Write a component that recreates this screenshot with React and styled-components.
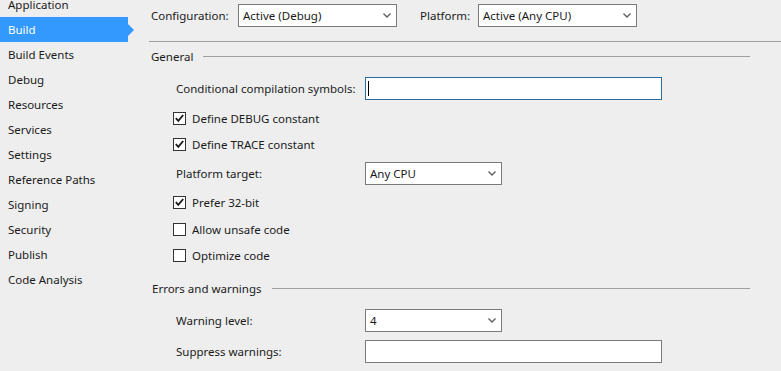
import React from 'react'
import styled, { createGlobalStyle } from 'styled-components'

const Global = createGlobalStyle`
  html, body {
    margin: 0;
    padding: 0;
    background: #eeeeee;
  }
  body {
    font-family: "Noto Sans", "Liberation Sans", sans-serif;
    font-size: 11.5px;
    color: #1a1a1a;
  }
`

const Page = styled.div`
  display: flex;
  width: 781px;
  height: 371px;
  overflow: hidden;
  background: #eeeeee;
`

const Sidebar = styled.div`
  width: 128px;
  flex-shrink: 0;
  display: flex;
  flex-direction: column;
  margin-top: -8px;
`

const NavItem = styled.div`
  position: relative;
  height: 25px;
  display: flex;
  align-items: center;
  padding-left: 8px;
  background: ${({ active }) => (active ? '#3399ff' : 'transparent')};
  color: ${({ active }) => (active ? '#ffffff' : '#1a1a1a')};
  cursor: default;

  &::after {
    content: '';
    display: ${({ active }) => (active ? 'block' : 'none')};
    position: absolute;
    right: -6px;
    top: 7px;
    border-top: 6px solid transparent;
    border-bottom: 6px solid transparent;
    border-left: 6px solid #3399ff;
  }
`

const Main = styled.div`
  flex: 1;
  margin-left: 21px;
  display: flex;
  flex-direction: column;
`

const Toolbar = styled.div`
  height: 42px;
  display: flex;
  align-items: flex-start;
  padding-top: 4px;
  box-sizing: border-box;
  border-bottom: 1px solid #a0a0a0;
`

const ToolLabel = styled.div`
  width: ${({ w }) => w}px;
  margin-left: ${({ ml }) => ml || 0}px;
  height: 23px;
  display: flex;
  align-items: center;
`

const Select = styled.div`
  width: ${({ w }) => w}px;
  height: 23px;
  box-sizing: border-box;
  border: 1px solid #7a7a7a;
  background: #ffffff;
  display: flex;
  align-items: center;
  justify-content: space-between;
  padding: 0 5px 0 4px;
`

const TextBox = styled.div`
  width: ${({ w }) => w}px;
  height: 23px;
  box-sizing: border-box;
  border: 1px solid ${({ focused }) => (focused ? '#2e6a9e' : '#7a7a7a')};
  background: #ffffff;
  display: flex;
  align-items: center;
  padding-left: 2px;
`

const Caret = styled.span`
  width: 1px;
  height: 15px;
  background: #000000;
`

const Content = styled.div`
  padding-right: 31px;
  display: flex;
  flex-direction: column;
`

const Row = styled.div`
  height: ${({ h }) => h}px;
  display: flex;
  align-items: center;
  padding-left: ${({ indent }) => indent || 0}px;
`

const SectionTitle = styled.span`
  padding-left: ${({ pl }) => pl}px;
  margin-right: 10px;
  white-space: nowrap;
`

const Rule = styled.div`
  flex: 1;
  height: 1px;
  background: #a0a0a0;
`

const FieldLabel = styled.div`
  width: 189px;
  flex-shrink: 0;
  white-space: nowrap;
`

const Box = styled.div`
  width: 13px;
  height: 13px;
  box-sizing: border-box;
  border: 1px solid #333333;
  background: #ffffff;
  margin-right: 6px;
  display: flex;
  align-items: center;
  justify-content: center;
`

const Chevron = () => (
  <svg width="8" height="5" viewBox="0 0 8 5">
    <polyline points="0.5,0.5 4,4 7.5,0.5" fill="none" stroke="#606060" strokeWidth="1.4" />
  </svg>
)

const Check = () => (
  <svg width="11" height="11" viewBox="0 0 11 11">
    <polyline points="1.8,5.2 4.3,7.8 9.2,2" fill="none" stroke="#1e1e1e" strokeWidth="1.9" />
  </svg>
)

function Dropdown({ w, value }) {
  return (
    <Select w={w}>
      <span>{value}</span>
      <Chevron />
    </Select>
  )
}

function CheckRow({ h, checked, children }) {
  return (
    <Row h={h} indent={24}>
      <Box>{checked && <Check />}</Box>
      <span>{children}</span>
    </Row>
  )
}

const pages = [
  'Application', 'Build', 'Build Events', 'Debug', 'Resources', 'Services',
  'Settings', 'Reference Paths', 'Signing', 'Security', 'Publish', 'Code Analysis',
]

export default function App() {
  return (
    <>
      <Global />
      <Page>
        <Sidebar>
          {pages.map((p) => (
            <NavItem key={p} active={p === 'Build'}>{p}</NavItem>
          ))}
        </Sidebar>
        <Main>
          <Toolbar>
            <ToolLabel w={87} ml={2}>Configuration:</ToolLabel>
            <Dropdown w={159} value="Active (Debug)" />
            <ToolLabel w={58} ml={23}>Platform:</ToolLabel>
            <Dropdown w={159} value="Active (Any CPU)" />
          </Toolbar>
          <Content>
            <Row h={28}>
              <SectionTitle pl={2}>General</SectionTitle>
              <Rule />
            </Row>
            <Row h={37} indent={27}>
              <FieldLabel>Conditional compilation symbols:</FieldLabel>
              <TextBox w={297} focused><Caret /></TextBox>
            </Row>
            <CheckRow h={22} checked>Define DEBUG constant</CheckRow>
            <CheckRow h={30} checked>Define TRACE constant</CheckRow>
            <Row h={29} indent={27}>
              <FieldLabel>Platform target:</FieldLabel>
              <Dropdown w={137} value="Any CPU" />
            </Row>
            <CheckRow h={28} checked>Prefer 32-bit</CheckRow>
            <CheckRow h={26}>Allow unsafe code</CheckRow>
            <CheckRow h={27}>Optimize code</CheckRow>
            <Row h={38}>
              <SectionTitle pl={3}>Errors and warnings</SectionTitle>
              <Rule />
            </Row>
            <Row h={27} indent={27}>
              <FieldLabel>Warning level:</FieldLabel>
              <Dropdown w={137} value="4" />
            </Row>
            <Row h={35} indent={27}>
              <FieldLabel>Suppress warnings:</FieldLabel>
              <TextBox w={297} />
            </Row>
          </Content>
        </Main>
      </Page>
    </>
  )
}
